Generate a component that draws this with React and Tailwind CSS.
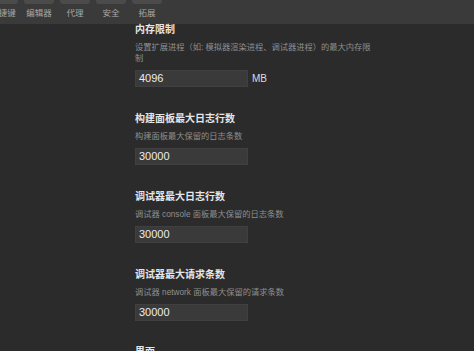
import React from "react";

const tabs = ["快捷键", "编辑器", "代理", "安全", "拓展"];

const sections = [
  {
    title: "内存限制",
    desc: "设置扩展进程（如: 模拟器渲染进程、调试器进程）的最大内存限制",
    value: "4096",
    unit: "MB",
  },
  { title: "构建面板最大日志行数", desc: "构建面板最大保留的日志条数", value: "30000" },
  { title: "调试器最大日志行数", desc: "调试器 console 面板最大保留的日志条数", value: "30000" },
  { title: "调试器最大请求条数", desc: "调试器 network 面板最大保留的请求条数", value: "30000" },
];

export default function App() {
  const font = { fontFamily: '"Liberation Sans", "Noto Sans CJK SC", sans-serif' };
  return (
    <div className="w-[474px] h-[351px] overflow-hidden bg-[#2b2b2b] flex flex-col" style={font}>
      <div className="h-[24px] shrink-0 bg-[#3a3a3a] flex items-start gap-[6px] ml-[-12px] pl-0">
        {tabs.map((t) => (
          <div key={t} className="w-[30px] flex flex-col items-center">
            <div className="w-[30px] h-[4px] bg-[#4b4b4b] rounded-b-[3px]" />
            <div className="mt-[4px] text-[8.5px] leading-[11px] text-[#a8a8a8] whitespace-nowrap">{t}</div>
          </div>
        ))}
      </div>
      <div className="pl-[135px] flex flex-col">
        {sections.map((s, i) => (
          <div key={i} className={i === 0 ? "mt-[-1px]" : "mt-[25px]"}>
            <div className="text-[10px] leading-[14px] font-bold text-[#e6e6e6]">{s.title}</div>
            <div className="mt-[5px] w-[240px] text-[8.25px] leading-[11px] text-[#8f8f8f]">{s.desc}</div>
            <div className="mt-[6px] flex items-center">
              <div className="w-[113px] h-[17px] bg-[#3a3a3a] border border-[#404040] flex items-center pl-[3px] text-[11px] text-[#ececec]">
                {s.value}
              </div>
              {s.unit && <span className="ml-[4px] text-[10px] text-[#dcdcdc]">{s.unit}</span>}
            </div>
          </div>
        ))}
        <div className="mt-[24px] text-[10px] leading-[14px] font-bold text-[#e6e6e6]">界面</div>
      </div>
    </div>
  );
}
